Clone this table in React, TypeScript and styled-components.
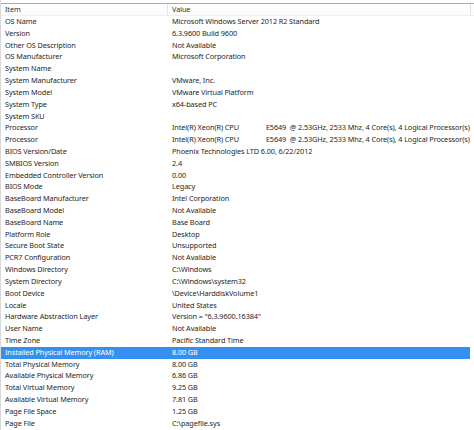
import React from "react";
import styled, { createGlobalStyle } from "styled-components";

const Global = createGlobalStyle`
  html, body { margin: 0; padding: 0; background: #ffffff; }
  body { font-family: "Noto Sans", "Open Sans", sans-serif; }
`;

const Frame = styled.div`
  width: 474px;
  height: 430px;
  overflow: hidden;
  background: #fff;
  padding-top: 3px;
  box-sizing: border-box;
  border-left: 1px solid #d8d8d8;
`;

const Header = styled.div`
  display: grid;
  grid-template-columns: 166px 1fr 4px;
  height: 13px;
  border-top: 1px solid #a9a9b0;
  border-bottom: 1px solid #eeeeee;
  box-sizing: border-box;
  background: linear-gradient(#ffffff, #fbfbfb);
`;

const HeadCell = styled.div<{ $divider?: boolean }>`
  font-size: 7.3px;
  letter-spacing: -0.1px;
  line-height: 11px;
  color: #333;
  padding-left: 4px;
  border-left: ${(p) => (p.$divider ? "1px solid #e3e3e3" : "none")};
  white-space: nowrap;
`;

const Rows = styled.div`
  display: flex;
  flex-direction: column;
`;

const Row = styled.div<{ $selected?: boolean }>`
  display: grid;
  grid-template-columns: 166px 1fr;
  height: 11.82px;
  margin-right: 4px;
  background: ${(p) => (p.$selected ? "#3490f0" : "transparent")};
  color: ${(p) => (p.$selected ? "#ffffff" : "#262626")};
`;

const Cell = styled.div<{ $value?: boolean }>`
  font-size: 7.3px;
  letter-spacing: -0.1px;
  line-height: 11.82px;
  padding-left: ${(p) => (p.$value ? "5px" : "4px")};
  white-space: pre;
  overflow: hidden;
`;

const cpu =
  "Intel(R) Xeon(R) CPU               E5649  @ 2.53GHz, 2533 Mhz, 4 Core(s), 4 Logical Processor(s)";

const data: [string, string][] = [
  ["OS Name", "Microsoft Windows Server 2012 R2 Standard"],
  ["Version", "6.3.9600 Build 9600"],
  ["Other OS Description", "Not Available"],
  ["OS Manufacturer", "Microsoft Corporation"],
  ["System Name", ""],
  ["System Manufacturer", "VMware, Inc."],
  ["System Model", "VMware Virtual Platform"],
  ["System Type", "x64-based PC"],
  ["System SKU", ""],
  ["Processor", cpu],
  ["Processor", cpu],
  ["BIOS Version/Date", "Phoenix Technologies LTD 6.00, 6/22/2012"],
  ["SMBIOS Version", "2.4"],
  ["Embedded Controller Version", "0.00"],
  ["BIOS Mode", "Legacy"],
  ["BaseBoard Manufacturer", "Intel Corporation"],
  ["BaseBoard Model", "Not Available"],
  ["BaseBoard Name", "Base Board"],
  ["Platform Role", "Desktop"],
  ["Secure Boot State", "Unsupported"],
  ["PCR7 Configuration", "Not Available"],
  ["Windows Directory", "C:\\Windows"],
  ["System Directory", "C:\\Windows\\system32"],
  ["Boot Device", "\\Device\\HarddiskVolume1"],
  ["Locale", "United States"],
  ["Hardware Abstraction Layer", 'Version = "6.3.9600.16384"'],
  ["User Name", "Not Available"],
  ["Time Zone", "Pacific Standard Time"],
  ["Installed Physical Memory (RAM)", "8.00 GB"],
  ["Total Physical Memory", "8.00 GB"],
  ["Available Physical Memory", "6.86 GB"],
  ["Total Virtual Memory", "9.25 GB"],
  ["Available Virtual Memory", "7.81 GB"],
  ["Page File Space", "1.25 GB"],
  ["Page File", "C:\\pagefile.sys"],
];

export default function App() {
  return (
    <Frame>
      <Global />
      <Header>
        <HeadCell>Item</HeadCell>
        <HeadCell $divider>Value</HeadCell>
        <HeadCell $divider />
      </Header>
      <Rows>
        {data.map(([k, v], i) => (
          <Row key={i} $selected={i === 28}>
            <Cell>{k}</Cell>
            <Cell $value>{v}</Cell>
          </Row>
        ))}
      </Rows>
    </Frame>
  );
}
